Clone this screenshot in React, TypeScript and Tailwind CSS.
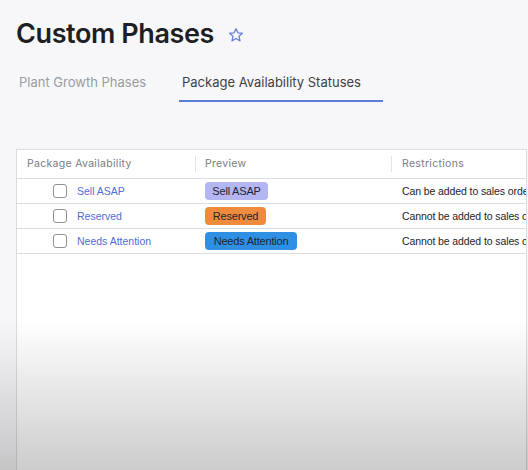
import React from "react";

const rows = [
  { name: "Sell ASAP", badge: "bg-[#b3b6f2]", w: "w-[63px]", text: "Can be added to sales orders" },
  { name: "Reserved", badge: "bg-[#f08a3c]", w: "w-[61px]", text: "Cannot be added to sales orders" },
  { name: "Needs Attention", badge: "bg-[#2f8fe3]", w: "w-[92px]", text: "Cannot be added to sales orders" },
];

export default function App() {
  return (
    <div className="relative h-[470px] w-[528px] overflow-hidden bg-[#f7f7f9] font-['Inter',sans-serif]">
      <div className="flex items-center pl-[16px] pt-[14px]">
        <h1 className="text-[27px] font-semibold leading-[40px] tracking-[-0.4px] text-[#1d1f24]">Custom Phases</h1>
        <svg className="ml-[14px] mt-[2px]" width="16" height="16" viewBox="0 0 24 24" fill="none" stroke="#6d80d8" strokeWidth="2" strokeLinejoin="round">
          <path d="M12 2.5l2.9 6.2 6.7.7-5 4.6 1.4 6.7L12 17.3l-6 3.4 1.4-6.7-5-4.6 6.7-.7z" />
        </svg>
      </div>
      <div className="mt-[17px] flex pl-[19px] text-[13px] leading-[20px]">
        <div className="w-[160px] shrink-0 pt-[1px] text-[#9a9ca3]">Plant Growth Phases</div>
        <div className="flex w-[204px] shrink-0 flex-col">
          <div className="pl-[3px] pt-[1px] text-[#3d3f45]">Package Availability Statuses</div>
          <div className="mt-[8px] h-[2px] w-[204px] bg-[#5b7bd6]" />
        </div>
      </div>
      <div className="ml-[16px] mt-[47px] h-[330px] w-[511px] overflow-hidden border-l border-r border-t border-[#dcdde0] bg-white">
        <div className="flex h-[29px] items-center border-b border-[#dcdde0] text-[10.5px] tracking-[0.3px] text-[#7a7c82]">
          <div className="w-[178px] shrink-0 pl-[10px]">Package Availability</div>
          <div className="h-[16px] w-px shrink-0 bg-[#e3e4e7]" />
          <div className="w-[195px] shrink-0 pl-[9px]">Preview</div>
          <div className="h-[16px] w-px shrink-0 bg-[#e3e4e7]" />
          <div className="shrink-0 pl-[10px]">Restrictions</div>
        </div>
        {rows.map((r) => (
          <div key={r.name} className="flex h-[25px] items-center overflow-hidden border-b border-[#dcdde0] font-['Liberation_Sans',Arial,sans-serif] text-[11px]">
            <div className="flex w-[178px] shrink-0 items-center pl-[36px]">
              <div className="h-[14px] w-[14px] shrink-0 rounded-[3px] border border-[#8f9196] bg-white" />
              <span className="ml-[10px] pt-[1px] text-[10.5px] text-[#4d6ed6]">{r.name}</span>
            </div>
            <div className="w-px shrink-0" />
            <div className="w-[195px] shrink-0 pl-[9px]">
              <div className={`flex h-[18px] ${r.w} items-center justify-center rounded-[4px] pt-[1px] ${r.badge} text-[11px] tracking-[-0.2px] text-[#1f2430]`}>{r.name}</div>
            </div>
            <div className="w-px shrink-0" />
            <div className="shrink-0 whitespace-nowrap pl-[10px] pt-[1px] text-[10.5px] tracking-[-0.1px] text-[#222428]">{r.text}</div>
          </div>
        ))}
      </div>
      <div className="pointer-events-none absolute bottom-0 left-0 h-[150px] w-full bg-gradient-to-b from-transparent to-black/20" />
    </div>
  );
}
